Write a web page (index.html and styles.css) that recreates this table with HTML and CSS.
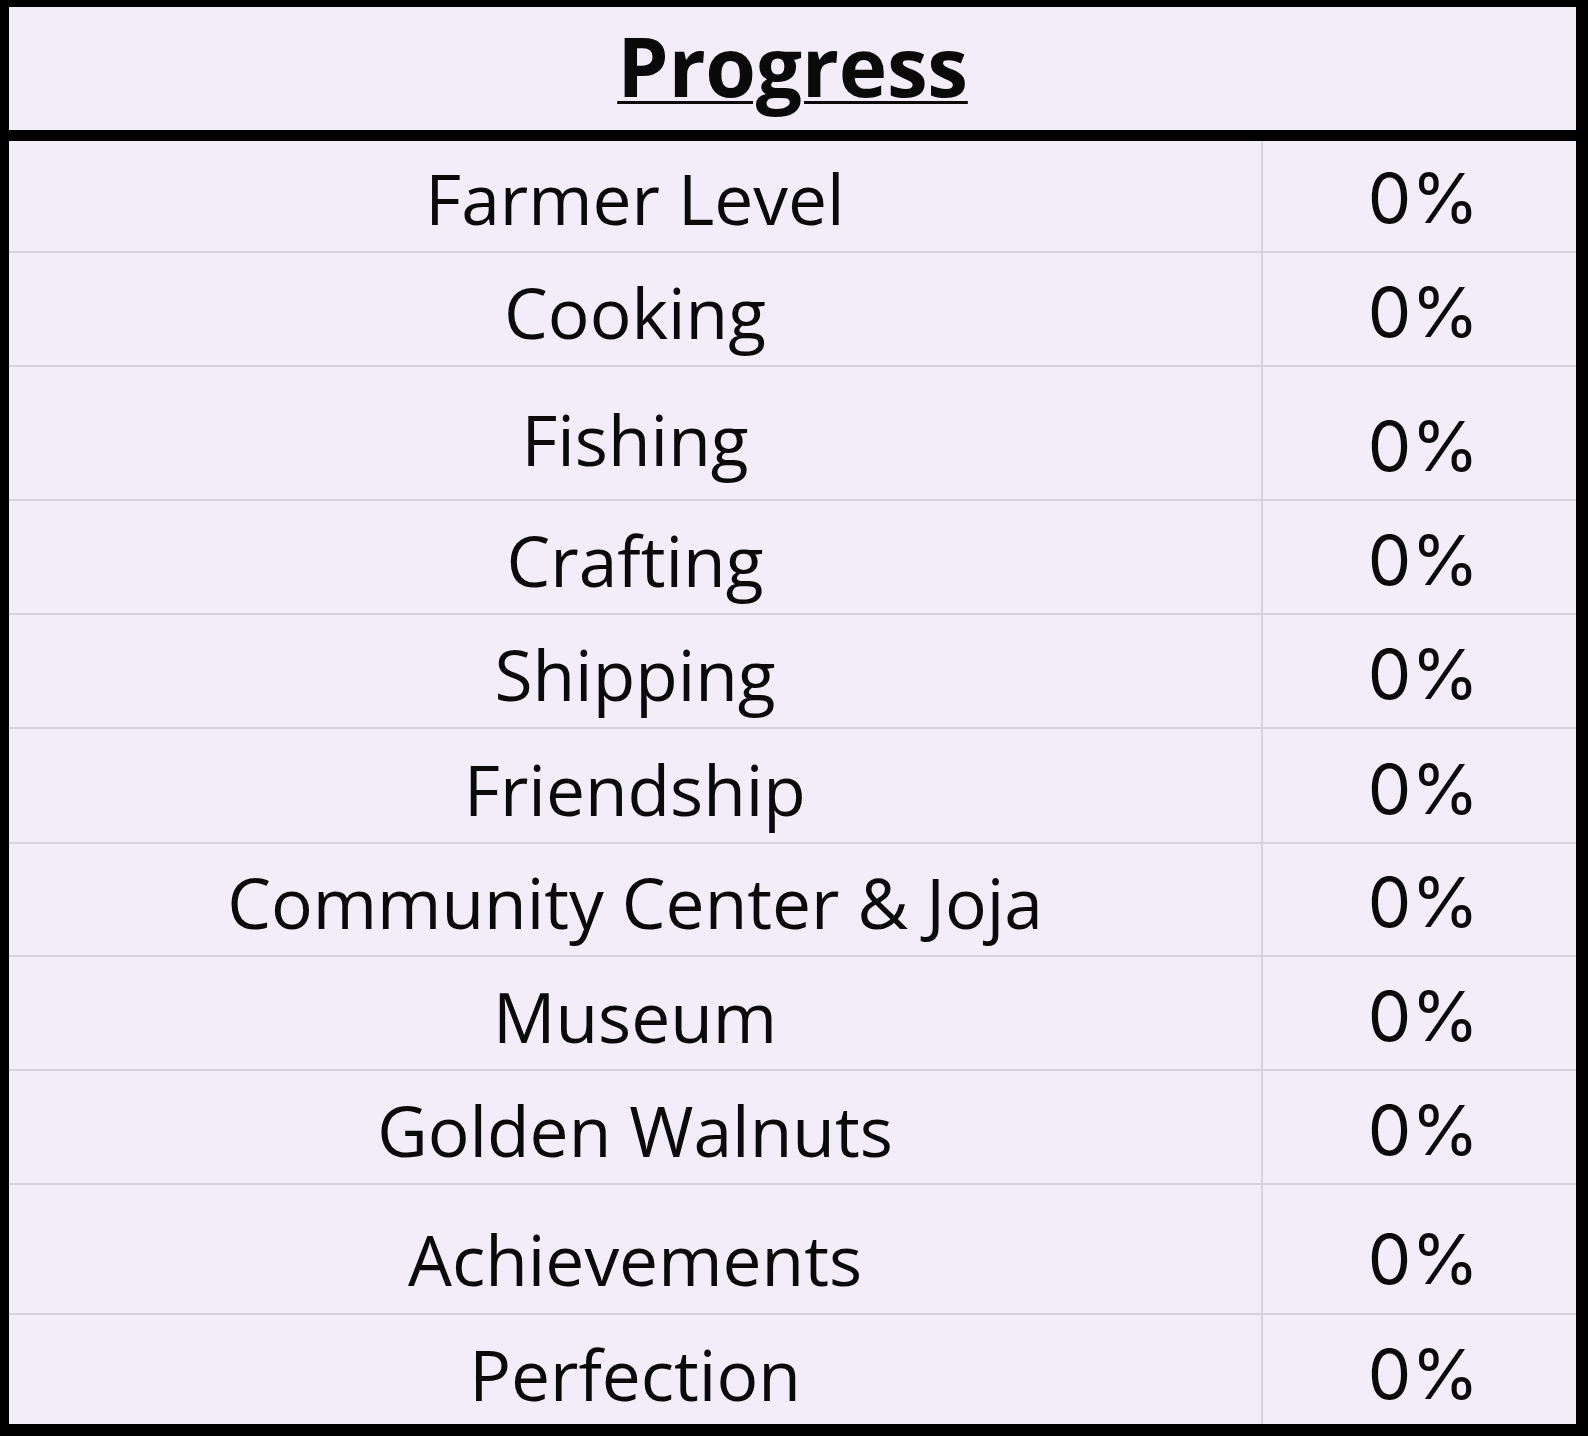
FILE: index.html
```html
<!DOCTYPE html>
<html lang="en">
<head>
<meta charset="utf-8">
<title>Progress</title>
<link rel="stylesheet" href="styles.css">
</head>
<body>
<div class="sheet">
  <div class="head"><span class="title">Progress</span></div>
  <div class="row h112"><div class="label">Farmer Level</div><div class="value">0%</div></div>
  <div class="row"><div class="label">Cooking</div><div class="value">0%</div></div>
  <div class="row h134"><div class="label mid">Fishing</div><div class="value">0%</div></div>
  <div class="row"><div class="label">Crafting</div><div class="value">0%</div></div>
  <div class="row"><div class="label">Shipping</div><div class="value">0%</div></div>
  <div class="row h115"><div class="label">Friendship</div><div class="value">0%</div></div>
  <div class="row h113"><div class="label">Community Center &amp; Joja</div><div class="value">0%</div></div>
  <div class="row"><div class="label">Museum</div><div class="value">0%</div></div>
  <div class="row"><div class="label">Golden Walnuts</div><div class="value">0%</div></div>
  <div class="row h130"><div class="label">Achievements</div><div class="value">0%</div></div>
  <div class="row last"><div class="label">Perfection</div><div class="value">0%</div></div>
</div>
</body>
</html>
```
FILE: styles.css
```css
html, body {
  margin: 0;
  padding: 0;
  background: #f3edfa;
}

.sheet {
  width: 1588px;
  height: 1436px;
  box-sizing: border-box;
  border-style: solid;
  border-color: #000;
  border-width: 7px 12px 12px 9px;
  background: #f3edfa;
  display: flex;
  flex-direction: column;
  font-family: "Open Sans", "Noto Sans", sans-serif;
  color: #0a0a0a;
}

.head {
  height: 134px;
  box-sizing: border-box;
  border-bottom: 11px solid #000;
  display: flex;
  align-items: center;
  justify-content: center;
  padding-bottom: 8px;
}

.title {
  font-weight: 700;
  font-size: 82px;
  line-height: 1;
  text-decoration: underline;
  text-decoration-thickness: 3px;
  text-underline-offset: 4px;
  letter-spacing: -0.3px;
}

.row {
  height: 114px;
  box-sizing: border-box;
  border-bottom: 2px solid #d8d1de;
  display: grid;
  grid-template-columns: 1254px 1fr;
}

.row.h112 { height: 112px; }
.row.h113 { height: 113px; }
.row.h115 { height: 115px; }
.row.h130 { height: 130px; }
.row.h134 { height: 134px; }
.row.last {
  height: auto;
  flex: 1;
  border-bottom: none;
}

.label,
.value {
  display: flex;
  align-items: flex-end;
  justify-content: center;
  font-size: 69.5px;
  line-height: 1;
  padding-bottom: 18px;
  white-space: nowrap;
}

.label {
  border-right: 2px solid #d8d1de;
}

.value {
  font-family: "Inter", "Open Sans", sans-serif;
  font-size: 69px;
  font-weight: 400;
  padding-left: 8px;
}

.label.mid {
  padding-bottom: 25px;
}

.row.h130 .label,
.row.h130 .value {
  padding-bottom: 19px;
}

.row.last .label,
.row.last .value {
  padding-bottom: 15px;
}
```
